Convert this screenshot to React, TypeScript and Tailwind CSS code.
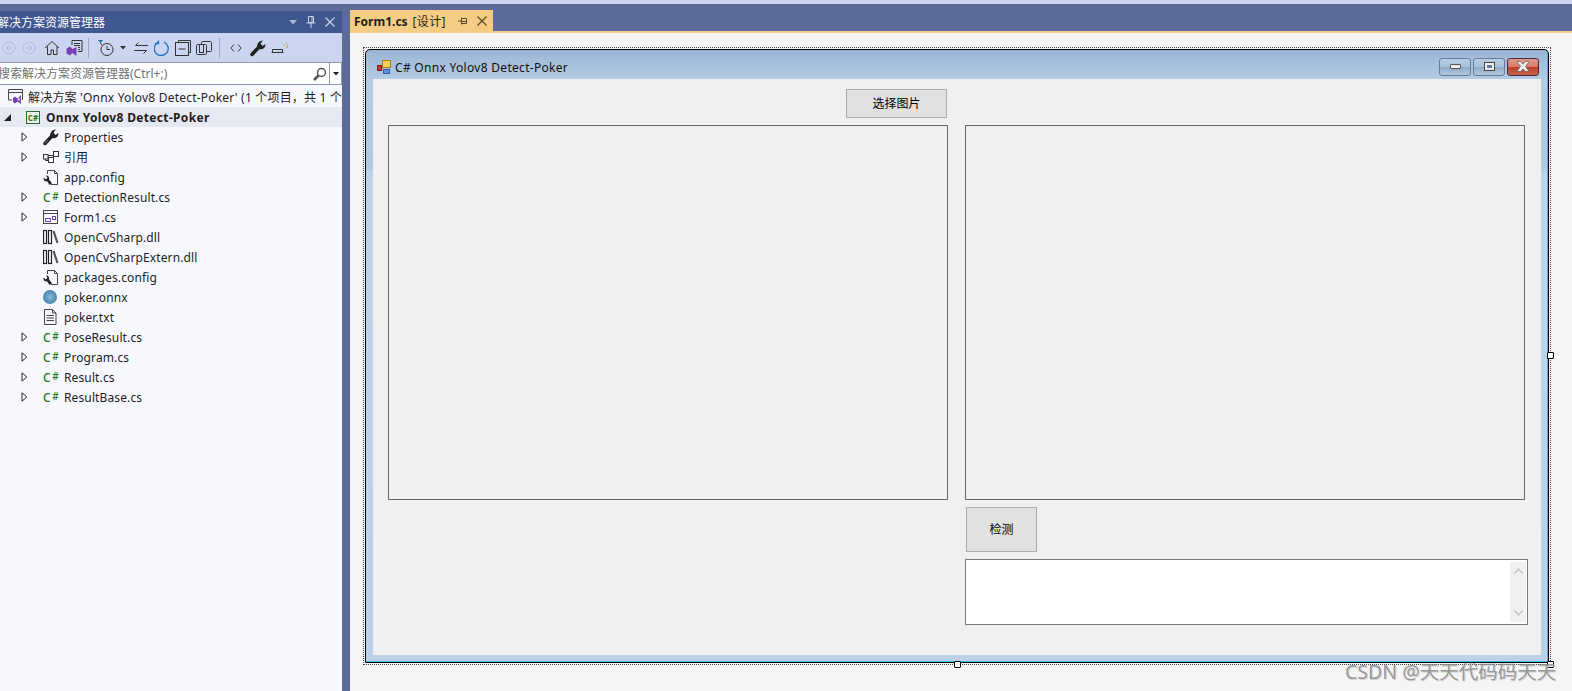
import React from "react";

const uiFont = "font-['Noto_Sans','Noto_Sans_CJK_SC',sans-serif]";

const WrenchIcon = () => (
  <svg width="16" height="18" viewBox="0 0 16 18" className="shrink-0">
    <path d="M2 15.500 8.500 8.500" stroke="#222" strokeWidth="3.500" strokeLinecap="round" />
    <path d="M7.500 9.500C6 6 8.500 1.500 13 1.500L10.500 4.500l2 2.500 3-2C15.500 9.500 11.500 11.500 7.500 9.500Z" fill="#222" />
    <path d="M2 15.500 5 12.200" stroke="#888" strokeWidth=".8" />
  </svg>
);

const RefsIcon = () => (
  <svg width="16" height="16" viewBox="0 0 16 16" fill="none" stroke="#333" className="shrink-0">
    <rect x=".5" y="5.500" width="4.500" height="4.500" />
    <rect x="5.500" y="8.500" width="5" height="5" fill="#fff" />
    <rect x="10.500" y="2.500" width="5" height="5" />
    <path d="M5 6.500h5.500M2.500 10v1.500h3" />
  </svg>
);

const ConfigIcon = () => (
  <svg width="16" height="17" viewBox="0 0 16 17" fill="none" className="shrink-0">
    <path d="M4.500 5V1.500h7l3 3v11H8" stroke="#444" />
    <path d="M11.500 1.500v3h3" stroke="#444" />
    <path d="M.5 9.500c0 2.300 1.900 3.300 3.500 2.800L6.700 16l2.300-1.800-3-3.700c.7-1.800-.6-4-3-4L4.500 8.700 2.800 10.400 1 8.700Z" fill="#222" />
  </svg>
);

const CsIcon = () => (
  <span className="w-4 shrink-0 text-[12px] leading-4 font-medium text-[#1f7a1f] whitespace-nowrap">
    C<span className="text-[10px] font-medium align-[2px] ml-[1.500px]">#</span>
  </span>
);

const FormIcon = () => (
  <svg width="16" height="16" viewBox="0 0 16 16" fill="none" className="shrink-0">
    <rect x=".5" y="1.500" width="14" height="13" stroke="#444" />
    <path d="M1 4.500h13" stroke="#444" />
    <rect x="2.500" y="9.500" width="5" height="3" stroke="#6f42c1" />
    <rect x="9.500" y="7.500" width="3" height="3" stroke="#6f42c1" />
  </svg>
);

const DllIcon = () => (
  <svg width="16" height="16" viewBox="0 0 16 16" fill="none" stroke="#222" className="shrink-0">
    <rect x=".5" y="1.500" width="3" height="13" strokeWidth="1.200" />
    <rect x="5.500" y="1.500" width="3" height="13" strokeWidth="1.200" />
    <path d="M10.500 2 14.500 14" strokeWidth="2.200" stroke="#555" />
  </svg>
);

const OnnxIcon = () => (
  <span className="size-[14px] shrink-0 mr-[2px] rounded-full bg-[radial-gradient(circle_at_50%_50%,#8db8d4,#3f86b5_75%,#2f6f9e)]" />
);

const TxtIcon = () => (
  <svg width="16" height="16" viewBox="0 0 16 16" fill="none" stroke="#444" className="shrink-0">
    <path d="M1.500 .5h8l3.500 3.500v11.500H1.500Z" />
    <path d="M9.500 .5V4H13M3.500 6.500h7.500M3.500 9h7.500M3.500 11.500h7.500" />
  </svg>
);

const SolutionIcon = () => (
  <svg width="16" height="16" viewBox="0 0 16 16" fill="none" className="shrink-0">
    <path d="M4 11H.5V.5h14V11" stroke="#444" />
    <path d="M.5 3.500h14" stroke="#444" />
    <path d="M13 6v9L9.500 12.500l-2.500 2-2-1.500v-4l2-1.500 2.500 2Z" fill="#7b3fb5" />
    <path d="M11.500 8.500v3.500l-2-1.500Z" fill="#fff" />
  </svg>
);

const VsDocIcon = () => (
  <svg width="18" height="18" viewBox="0 0 18 18" fill="none">
    <path d="M7 6V1.500h10v11h-4" stroke="#333" />
    <path d="M9 4.500h6M9 6.500h6M13 8.500h2M13 10.500h2" stroke="#333" />
    <path d="M11.500 8v9L7.500 14 5 16.500 1.500 14.500v-5L5 7.500 7.500 10Z" fill="#7b3fb5" />
  </svg>
);

const Expander = () => (
  <svg width="7" height="10" viewBox="0 0 7 10" className="shrink-0">
    <path d="M1 .8v8.400L5.800 5Z" fill="#fff" stroke="#222" />
  </svg>
);

type TreeRow = { name: string; icon: React.ReactNode; expand?: boolean };

const rows: TreeRow[] = [
  { name: "Properties", icon: <WrenchIcon />, expand: true },
  { name: "引用", icon: <RefsIcon />, expand: true },
  { name: "app.config", icon: <ConfigIcon /> },
  { name: "DetectionResult.cs", icon: <CsIcon />, expand: true },
  { name: "Form1.cs", icon: <FormIcon />, expand: true },
  { name: "OpenCvSharp.dll", icon: <DllIcon /> },
  { name: "OpenCvSharpExtern.dll", icon: <DllIcon /> },
  { name: "packages.config", icon: <ConfigIcon /> },
  { name: "poker.onnx", icon: <OnnxIcon /> },
  { name: "poker.txt", icon: <TxtIcon /> },
  { name: "PoseResult.cs", icon: <CsIcon />, expand: true },
  { name: "Program.cs", icon: <CsIcon />, expand: true },
  { name: "Result.cs", icon: <CsIcon />, expand: true },
  { name: "ResultBase.cs", icon: <CsIcon />, expand: true },
];

const Toolbar = () => (
  <div className="h-[29px] bg-[#ccd5f0] flex items-center shrink-0">
    <span className="w-[17px] flex justify-center">
      <svg width="14" height="14" viewBox="0 0 14 14" fill="none" stroke="#b4bbce">
        <circle cx="7" cy="7" r="6" />
        <path d="M10.500 7h-6M7 4 4 7l3 3" />
      </svg>
    </span>
    <span className="w-[22px] ml-[1px] flex justify-center">
      <svg width="14" height="14" viewBox="0 0 14 14" fill="none" stroke="#b4bbce">
        <circle cx="7" cy="7" r="6" />
        <path d="M3.500 7h6M7 4l3 3-3 3" />
      </svg>
    </span>
    <span className="w-[23px] flex justify-center">
      <svg width="16" height="16" viewBox="0 0 16 16" fill="none" stroke="#333">
        <path d="M1 8l7-6.500L15 8M3.500 6.500v8H7V10h2.500v4.500H13v-8" />
      </svg>
    </span>
    <span className="w-[21px] flex justify-center">
      <VsDocIcon />
    </span>
    <span className="w-px h-[20px] bg-[#9aa7c4] ml-[4px] mr-[7px]" />
    <span className="w-[20px] flex justify-center">
      <svg width="18" height="18" viewBox="0 0 18 18" fill="none">
        <path d="M1 1h5L3.500 4Z" fill="#1c6fb8" />
        <circle cx="10" cy="10.500" r="6" stroke="#333" />
        <path d="M10 7v3.500h3" stroke="#333" />
        <path d="M3.500 4l1.500 2" stroke="#333" />
      </svg>
    </span>
    <span className="w-[14px] flex justify-center">
      <svg width="6" height="4" viewBox="0 0 6 4"><path d="M0 0h6L3 3.500Z" fill="#333" /></svg>
    </span>
    <span className="w-[21px] flex justify-center">
      <svg width="14" height="12" viewBox="0 0 14 12" fill="none" stroke="#333">
        <path d="M14 3.500H1.500L4.500 .5M0 8.500h12.500L9.500 11.500" />
      </svg>
    </span>
    <span className="w-[21px] flex justify-center">
      <svg width="16" height="16" viewBox="0 0 16 16" fill="none" stroke="#1c72c4" strokeWidth="1.300">
        <path d="M10 2.100A7 7 0 1 1 4 2.300" />
        <path d="M4.500 .5v3h-3.500" />
      </svg>
    </span>
    <span className="w-[21px] flex justify-center">
      <svg width="16" height="16" viewBox="0 0 16 16" fill="none" stroke="#333">
        <path d="M3.500 2.500V.5h12v12h-2" />
        <rect x=".5" y="2.500" width="13" height="13" />
        <path d="M3.500 9h7" />
      </svg>
    </span>
    <span className="w-[21px] flex justify-center">
      <svg width="16" height="16" viewBox="0 0 16 16" fill="none" stroke="#333">
        <rect x="5.500" y="1.500" width="10" height="10" rx="1" />
        <rect x=".5" y="4.500" width="10" height="10" rx="1" fill="#ccd5f0" />
        <rect x="3.500" y="4.500" width="4" height="8" />
      </svg>
    </span>
    <span className="w-px h-[20px] bg-[#9aa7c4] ml-[5px] mr-[5px]" />
    <span className="w-[21px] flex justify-center">
      <svg width="12" height="8" viewBox="0 0 12 8" fill="none" stroke="#333">
        <path d="M4 .5.800 4 4 7.500M8 .5 11.200 4 8 7.500" />
      </svg>
    </span>
    <span className="w-[23px] flex justify-center">
      <svg width="16" height="18" viewBox="0 0 16 18">
        <path d="M2 15.500 8.500 8.500" stroke="#222" strokeWidth="3.500" strokeLinecap="round" />
        <path d="M7.500 9.500C6 6 8.500 1.500 13 1.500L10.500 4.500l2 2.500 3-2C15.500 9.500 11.500 11.500 7.500 9.500Z" fill="#222" />
      </svg>
    </span>
    <span className="w-[21px] flex justify-center">
      <svg width="18" height="12" viewBox="0 0 18 12" fill="none">
        <path d="M.5 10.500h12M1.500 10.500V7.500h10v3" stroke="#333" />
        <path d="M13 3h1M15 1h1M15 5h2M16 3h1" stroke="#c98a1b" />
      </svg>
    </span>
  </div>
);

const SolutionExplorer = () => (
  <aside className="w-[342px] mt-[7px] flex flex-col shrink-0 overflow-hidden bg-[#f6f8fe]">
    <div className="h-[22px] bg-[#3f568f] flex items-center shrink-0 text-white text-xs pr-[7px]">
      <span className="-ml-[3px] pt-[2px] flex-1 whitespace-nowrap">解决方案资源管理器</span>
      <svg width="8" height="5" viewBox="0 0 8 5" className="mr-[9px]"><path d="M0 0h8L4 4.500Z" fill="#a9b6d6" /></svg>
      <svg width="10" height="12" viewBox="0 0 10 12" fill="none" stroke="#c6d0e6" className="mr-[9px]">
        <path d="M2.500.5h5v6h-5ZM.5 7h9M5 7v5M6 1v5" />
      </svg>
      <svg width="10" height="10" viewBox="0 0 10 10" fill="none" stroke="#c6d0e6" strokeWidth="1.300">
        <path d="M.5.5l9 9M9.500.5l-9 9" />
      </svg>
    </div>
    <Toolbar />
    <div className="h-[23px] bg-white border-y border-[#8e97ad] flex items-center shrink-0">
      <span className="-ml-[2px] flex-1 text-xs text-[#717171] whitespace-nowrap">搜索解决方案资源管理器(Ctrl+;)</span>
      <svg width="14" height="14" viewBox="0 0 14 14" fill="none" stroke="#555" className="mr-[2px]">
        <circle cx="8.500" cy="5.500" r="4" strokeWidth="1.500" />
        <path d="M5.500 8.500 1 13" strokeWidth="2.500" />
      </svg>
      <span className="w-[13px] h-full border-x border-[#8e97ad] flex items-center justify-center">
        <svg width="6" height="4" viewBox="0 0 6 4"><path d="M0 0h6L3 3.500Z" fill="#222" /></svg>
      </span>
    </div>
    <div className="flex-1 pt-[2px] text-xs text-[#1e1e1e]">
      <div className="h-5 pl-2 flex items-center gap-[4px] whitespace-nowrap overflow-hidden">
        <SolutionIcon />
        <span className="pt-[2px] tracking-[0.2px]">解决方案 'Onnx Yolov8 Detect-Poker' (1 个项目，共 1 个项目)</span>
      </div>
      <div className="h-5 bg-[#e6e8f2] flex items-center font-bold">
        <svg width="7" height="7" viewBox="0 0 7 7" className="ml-1"><path d="M7 0v7H0Z" fill="#222" /></svg>
        <span className="ml-[15px] w-[14px] h-[13px] border border-[#2e6b34] bg-[#eef3ee] text-[8px] leading-[11px] text-center text-[#1f7a1f]">C#</span>
        <span className="ml-[6px] pt-[2px] tracking-[0.33px]">Onnx Yolov8 Detect-Poker</span>
      </div>
      {rows.map((row) => (
        <div key={row.name} className="h-5 flex items-center pl-[21px] first:mt-[1px]">
          <span className="w-[22px] shrink-0 flex">{row.expand && <Expander />}</span>
          {row.icon}
          <span className="ml-[5px] pt-[2px] tracking-[0.12px]">{row.name}</span>
        </div>
      ))}
    </div>
  </aside>
);

const DocTab = () => (
  <div className="h-[29px] pt-[6px] shrink-0 border-b-2 border-[#f5cc84]">
    <div className="w-[143px] h-[21px] bg-[#f5cc84] flex items-center text-xs text-[#1e1e1e] pl-1">
      <span className="font-bold pt-[2px]">Form1.cs</span>
      <span className="ml-[5px] pt-[2px] tracking-[0.3px]">[设计]</span>
      <svg width="10" height="8" viewBox="0 0 10 8" fill="none" stroke="#5b4a2a" className="ml-[12px]">
        <path d="M0 4h3M3.500.5v7M3.500 1.500h5v5h-5M3.500 4.500h5" />
      </svg>
      <svg width="10" height="10" viewBox="0 0 10 10" fill="none" stroke="#5b4a2a" strokeWidth="1.300" className="ml-[9px]">
        <path d="M.5.5l9 9M9.500.5l-9 9" />
      </svg>
    </div>
  </div>
);

const CaptionButton = ({ close, children }: { close?: boolean; children: React.ReactNode }) => (
  <div
    className={
      close
        ? "w-8 h-[18px] rounded-[3px] border border-[#4a2a3c] bg-[linear-gradient(#e09a8c,#d97a68_48%,#b8412a_52%,#c9644c)] flex items-center justify-center"
        : "w-8 h-[18px] rounded-[3px] border border-[#6a7a9c] bg-[linear-gradient(#b9cde4,#a9c0da_48%,#8ea9c8_52%,#b2c9e2)] flex items-center justify-center"
    }
  >
    {children}
  </div>
);

const Handle = ({ className }: { className: string }) => (
  <span className={`absolute size-[7px] rounded-[1px] bg-white border border-black ${className}`} />
);

const DesignerForm = () => (
  <div className="relative w-[1188px] h-[618px] ml-[13px] mt-[14px] border border-dotted border-[#444] p-px">
    <div className="h-full rounded-t-[5px] border border-black shadow-[inset_-1px_-1px_0_#35c0e8] bg-[linear-gradient(#9ab5d3_0px,#b4cce6_30px,#b0c9e3_118px,#bcd3ea_122px,#bad1e9_100%)] flex flex-col pb-[7px]">
      <div className="h-[29px] flex items-center pt-[4px] pl-[11px] pr-[9px] shrink-0">
        <svg width="14" height="14" viewBox="0 0 14 14" className="shrink-0">
          <rect x="5.500" y=".5" width="8" height="7" fill="#f7cf55" stroke="#a67c1a" />
          <rect x=".5" y="5.500" width="4" height="5" fill="#d8322a" stroke="#7f1d18" />
          <rect x="6.500" y="9.500" width="6" height="4" fill="#5b92d8" stroke="#2c5a9c" />
        </svg>
        <span className="ml-[4px] pt-[2px] flex-1 text-xs tracking-[0.3px] text-[#111]">C# Onnx Yolov8 Detect-Poker</span>
        <div className="flex gap-[2px]">
          <CaptionButton>
            <span className="block w-[11px] h-[5px] bg-[#eee] border border-[#555] rounded-[1px]" />
          </CaptionButton>
          <CaptionButton>
            <span className="w-[11px] h-[9px] bg-[#eee] border border-[#444] flex items-center justify-center">
              <span className="w-[5px] h-[3px] bg-[#5b7aa0]" />
            </span>
          </CaptionButton>
          <CaptionButton close>
            <svg width="12" height="11" viewBox="0 0 12 11">
              <path d="M.5.5h3L6 3 8.500.5h3v1L8.500 5.500l3 4v1h-3L6 8l-2.500 2.500h-3v-1l3-4-3-4Z" fill="#eee" stroke="#555" strokeWidth=".7" />
            </svg>
          </CaptionButton>
        </div>
      </div>
      <div className="flex-1 mx-[7px] bg-[#f0f0f0] pt-[10px] text-xs text-black">
        <div className="ml-[473px] w-[101px] h-[29px] bg-[#e1e1e1] border border-[#adadad] flex items-center justify-center">
          选择图片
        </div>
        <div className="mt-[7px] ml-[15px] flex gap-[17px]">
          <div className="w-[560px] h-[375px] border border-[#696969]" />
          <div className="w-[560px] h-[375px] border border-[#696969]" />
        </div>
        <div className="ml-[592px] mt-[7px] w-[563px]">
          <div className="ml-px w-[71px] h-[45px] bg-[#e1e1e1] border border-[#adadad] flex items-center justify-center">
            检测
          </div>
          <div className="mt-[7px] h-[66px] bg-white border border-[#7a7a7a] flex justify-end p-px">
            <div className="w-4 mt-px mb-px bg-[#f0f0f0] flex flex-col items-center justify-between py-[6px]">
              <svg width="9" height="6" viewBox="0 0 9 6" fill="none" stroke="#c4c4c4" strokeWidth="1.500"><path d="M.5 5.500 4.500 1l4 4.500" /></svg>
              <svg width="9" height="6" viewBox="0 0 9 6" fill="none" stroke="#c4c4c4" strokeWidth="1.500"><path d="M.5.5l4 4.500 4-4.500" /></svg>
            </div>
          </div>
        </div>
      </div>
    </div>
    <Handle className="-right-[4px] top-[304px]" />
    <Handle className="-bottom-[4px] left-[590px]" />
    <Handle className="-bottom-[4px] -right-[4px]" />
  </div>
);

export default function App() {
  return (
    <div className={`relative w-[1572px] h-[691px] overflow-hidden flex flex-col bg-[#5d6b99] ${uiFont}`}>
      <div className="h-1 bg-[#ccd5f0] shrink-0" />
      <div className="flex-1 flex gap-2 min-h-0">
        <SolutionExplorer />
        <main className="flex-1 flex flex-col min-w-0">
          <DocTab />
          <div className="flex-1 bg-[#f5f5f5]">
            <DesignerForm />
          </div>
        </main>
      </div>
      <span className="absolute left-[1345px] top-[660px] text-[19.5px] leading-6 text-[#8a8a8a] opacity-85 [text-shadow:1px_1px_0_#d0d0d0] whitespace-nowrap">
        CSDN @天天代码码天天
      </span>
    </div>
  );
}
